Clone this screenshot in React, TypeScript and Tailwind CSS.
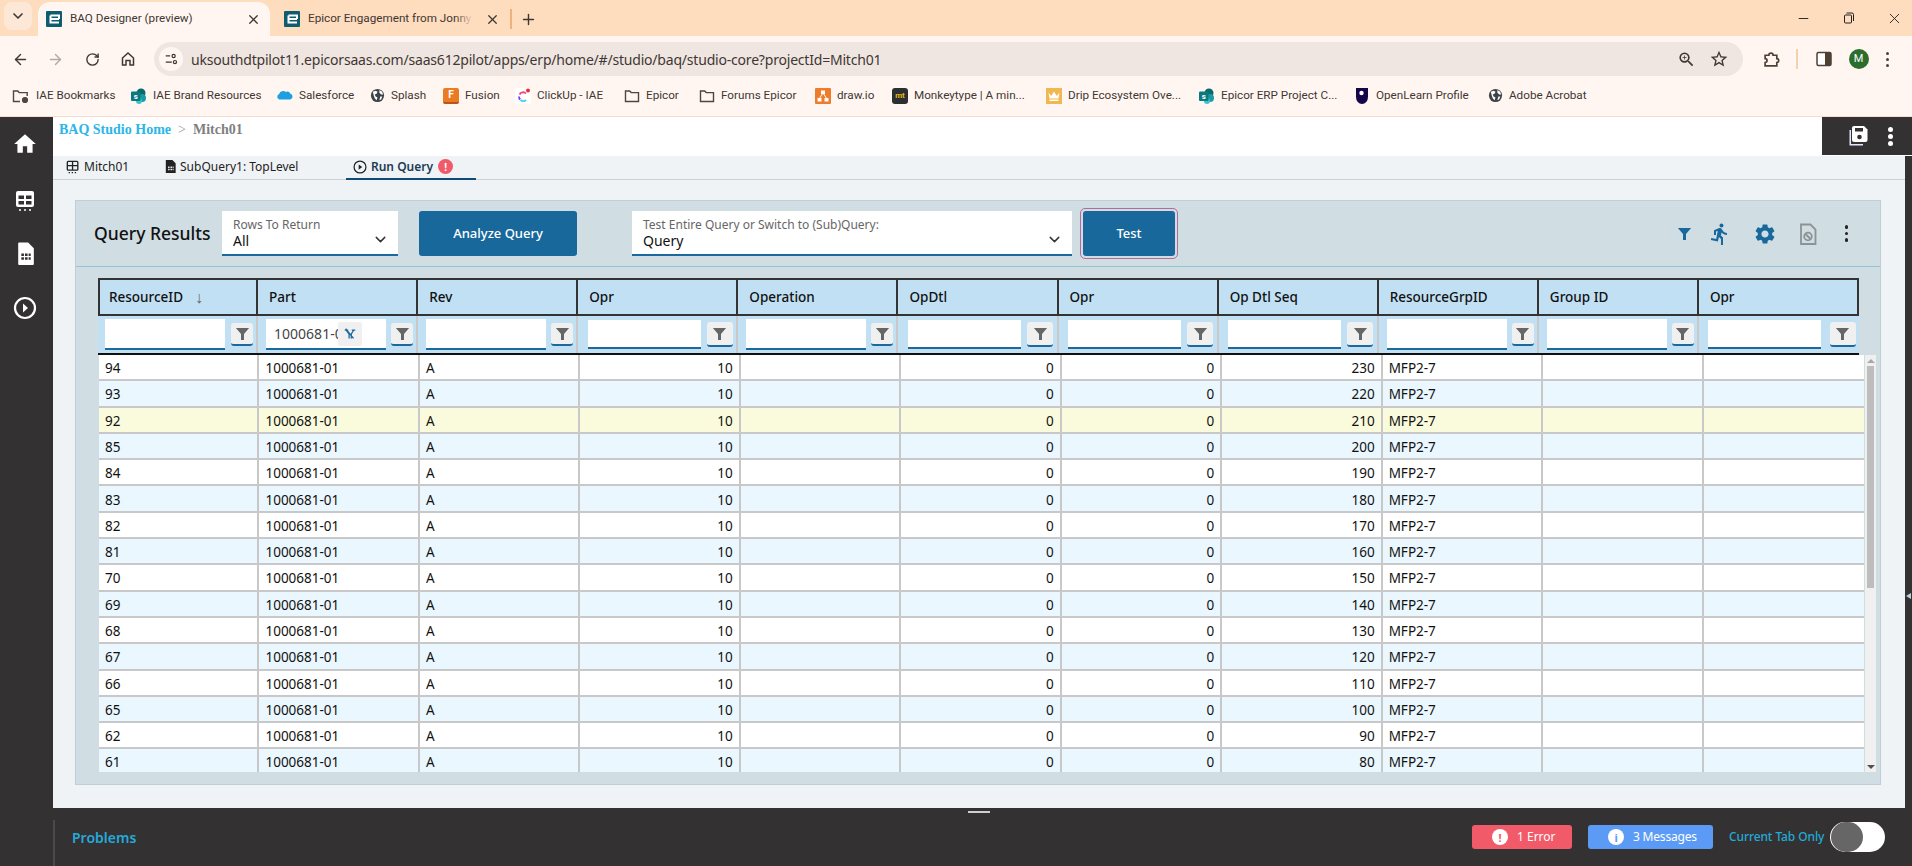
import { type ReactNode } from "react";
import { MdDirectionsRun, MdHome, MdSettings, MdStarBorder, MdZoomIn } from "react-icons/md";
import { ChevronDown, X, Plus, ArrowLeft, ArrowRight, RotateCw, Minus } from "lucide-react";

const COLUMNS: { label: string; num: boolean }[] = [
  { label: "ResourceID", num: false },
  { label: "Part", num: false },
  { label: "Rev", num: false },
  { label: "Opr", num: true },
  { label: "Operation", num: false },
  { label: "OpDtl", num: true },
  { label: "Opr", num: true },
  { label: "Op Dtl Seq", num: true },
  { label: "ResourceGrpID", num: false },
  { label: "Group ID", num: false },
  { label: "Opr", num: true },
];

const ROWS: [string, string][] = [
  ["94", "230"],
  ["93", "220"],
  ["92", "210"],
  ["85", "200"],
  ["84", "190"],
  ["83", "180"],
  ["82", "170"],
  ["81", "160"],
  ["70", "150"],
  ["69", "140"],
  ["68", "130"],
  ["67", "120"],
  ["66", "110"],
  ["65", "100"],
  ["62", "90"],
  ["61", "80"],
];

function EpicorLogo() {
  return (
    <svg viewBox="0 0 16 16" className="h-4 w-4 shrink-0">
      <rect width="16" height="16" rx="1" fill="#0f5c6e" />
      <path d="M13 8H4.500M4.500 4.500H13V8M4.500 4.500V11.500H13" fill="none" stroke="#fff" strokeWidth="2" />
    </svg>
  );
}

function Folder() {
  return (
    <svg viewBox="0 0 16 16" className="h-4 w-4 shrink-0" fill="none" stroke="#4f4640" strokeWidth="1.400">
      <path d="M1.500 3h4.200l1.500 1.600h7.300v8.900h-13z" />
    </svg>
  );
}

function Globe() {
  return (
    <svg viewBox="0 0 16 16" className="h-[15px] w-[15px] shrink-0">
      <circle cx="8" cy="8" r="7" fill="#3f4347" />
      <path d="M3 4l3-1 2 1-1 2-2 1 1 2 2 1-1 3-2-2-1-3zM10 2l3 2 1 3-2 0-2-2zM11 9l2 0-1 3-2 1z" fill="#fff" />
    </svg>
  );
}

function SharePoint() {
  return (
    <svg viewBox="0 0 16 16" className="h-4 w-4 shrink-0">
      <circle cx="10" cy="5" r="4.500" fill="#0b6a6e" />
      <circle cx="11" cy="10" r="4" fill="#1a9ba1" />
      <circle cx="8" cy="13" r="3" fill="#37c6d0" />
      <rect x="0" y="3.500" width="9.500" height="9.500" rx="1" fill="#0a7a7e" />
      <text x="4.700" y="11" textAnchor="middle" fontSize="8" fontWeight="700" fill="#fff">s</text>
    </svg>
  );
}

const BOOKMARKS: { label: string; width: string; icon: ReactNode }[] = [
  {
    label: "IAE Bookmarks",
    width: "w-[119px]",
    icon: (
      <svg viewBox="0 0 18 16" className="h-4 w-[18px] shrink-0" fill="none" stroke="#4f4640" strokeWidth="1.400">
        <path d="M8 13.500H1.500V3h4.200l1.500 1.600h8V8" />
        <circle cx="13" cy="12" r="2.400" fill="#4f4640" />
      </svg>
    ),
  },
  { label: "IAE Brand Resources", width: "w-[146px]", icon: <SharePoint /> },
  {
    label: "Salesforce",
    width: "w-[93px]",
    icon: (
      <svg viewBox="0 0 16 16" className="h-4 w-4 shrink-0">
        <path d="M6.500 3c1 0 1.800.4 2.300 1.100.5-.4 1.100-.6 1.700-.6 1.500 0 2.600 1 2.800 2.300 1.300.3 2.200 1.300 2.200 2.800 0 1.600-1.200 3-2.700 3H3.700C1.700 11.600.3 10.400.3 8.700c0-1.300.8-2.300 1.900-2.800.4-1.600 2.300-2.900 4.300-2.900z" fill="#1d9fe0" />
      </svg>
    ),
  },
  { label: "Splash", width: "w-[73px]", icon: <Globe /> },
  {
    label: "Fusion",
    width: "w-[72px]",
    icon: (
      <span className="flex h-4 w-4 shrink-0 items-center justify-center rounded-[2px] border-b-2 border-[#b9541a] bg-[#ea7b24] text-[10px] font-bold leading-none text-white">
        F
      </span>
    ),
  },
  {
    label: "ClickUp - IAE",
    width: "w-[109px]",
    icon: (
      <svg viewBox="0 0 16 16" className="h-4 w-4 shrink-0">
        <rect width="16" height="16" rx="2" fill="#fff" />
        <path d="M11 5.500a4 4 0 0 0-6.500 1" fill="none" stroke="#f0467e" strokeWidth="1.800" />
        <path d="M4 8.500a4 4 0 0 0 1.200 3" fill="none" stroke="#8930fd" strokeWidth="1.800" />
        <path d="M5.500 12a4 4 0 0 0 5.500 0" fill="none" stroke="#49ccf9" strokeWidth="1.800" />
        <circle cx="13" cy="2.500" r="2" fill="#ef2d2d" />
      </svg>
    ),
  },
  { label: "Epicor", width: "w-[75px]", icon: <Folder /> },
  { label: "Forums Epicor", width: "w-[116px]", icon: <Folder /> },
  {
    label: "draw.io",
    width: "w-[77px]",
    icon: (
      <svg viewBox="0 0 16 16" className="h-4 w-4 shrink-0">
        <rect width="16" height="16" rx="1" fill="#ee7c2b" />
        <path d="M8 5L4 11M8 5l4 6" stroke="#fff" strokeWidth="1" />
        <rect x="6" y="2.500" width="4" height="3.500" fill="#fff" />
        <rect x="2.500" y="10" width="4" height="3.500" fill="#fff" />
        <rect x="9.500" y="10" width="4" height="3.500" fill="#fff" />
      </svg>
    ),
  },
  {
    label: "Monkeytype | A min...",
    width: "w-[154px]",
    icon: (
      <span className="flex h-4 w-4 shrink-0 items-center justify-center rounded-[3px] bg-[#2c2e31] text-[8px] font-bold leading-none text-[#e2b714]">
        mt
      </span>
    ),
  },
  {
    label: "Drip Ecosystem Ove...",
    width: "w-[153px]",
    icon: (
      <svg viewBox="0 0 16 16" className="h-4 w-4 shrink-0">
        <rect width="16" height="16" fill="#efb850" />
        <path d="M2.500 4.500L5.200 8 8 3.500 10.800 8l2.700-3.500-1 6h-9zM3.500 11.500h9V13h-9z" fill="#fff" />
      </svg>
    ),
  },
  { label: "Epicor ERP Project C...", width: "w-[155px]", icon: <SharePoint /> },
  {
    label: "OpenLearn Profile",
    width: "w-[134px]",
    icon: (
      <svg viewBox="0 0 16 16" className="h-4 w-4 shrink-0">
        <path d="M2 0h12v9a6 7 0 0 1-12 0z" fill="#15064a" />
        <circle cx="7.500" cy="5" r="2.200" fill="#fff" />
      </svg>
    ),
  },
  { label: "Adobe Acrobat", width: "w-[120px]", icon: <Globe /> },
];

function Funnel({ className }: { className: string }) {
  return (
    <svg viewBox="0 0 16 16" className={className}>
      <path d="M1 2h14L9.600 8.500V15H6.400V8.500z" fill="currentColor" />
    </svg>
  );
}

function BrowserChrome() {
  return (
    <div className="shrink-0 font-['Roboto',sans-serif] text-[#3f3733]">
      {/* tab strip */}
      <div className="flex h-[36px] items-end bg-[#fedcbe]">
        <div className="ml-[4px] mb-[6px] flex h-[28px] w-[28px] items-center justify-center rounded-lg bg-[#fde8d8]">
          <ChevronDown className="h-4 w-4" strokeWidth={2.5} />
        </div>
        <div className="ml-[6px] flex h-[34px] w-[232px] items-center rounded-t-xl bg-[#fff6f2] pl-[8px] pr-[9px]">
          <EpicorLogo />
          <span className="ml-[8px] flex-1 text-[11.700px]">BAQ Designer (preview)</span>
          <X className="h-[15px] w-[15px]" strokeWidth={2} />
        </div>
        <div className="ml-[14px] flex h-[34px] items-center">
          <EpicorLogo />
          <span className="relative ml-[8px] w-[165px] whitespace-nowrap text-[11.700px]">
            Epicor Engagement from Jonny
            <span className="absolute inset-y-0 right-0 w-[18px] bg-gradient-to-r from-transparent to-[#fedcbe]" />
          </span>
          <X className="ml-[12px] h-[15px] w-[15px]" strokeWidth={2} />
          <span className="ml-[10px] h-[20px] w-[1.500px] bg-[#eeb27c]" />
          <Plus className="ml-[8px] h-[17px] w-[17px]" strokeWidth={2} />
        </div>
        <div className="ml-auto flex h-[36px] items-center pr-[9px] text-[#222]">
          <Minus className="h-[15px] w-[15px]" strokeWidth={1.5} />
          <svg viewBox="0 0 12 12" className="ml-[32px] h-[12px] w-[12px]" fill="none" stroke="currentColor" strokeWidth="1">
            <rect x="1.500" y="3" width="7" height="8" rx="1" />
            <path d="M3.500 1h5.500a1.500 1.500 0 0 1 1.500 1.500V9" />
          </svg>
          <X className="ml-[31px] h-[17px] w-[17px]" strokeWidth={1.3} />
        </div>
      </div>
      {/* address bar */}
      <div className="flex h-[40px] items-center bg-[#fff6f2] pl-[12px] pr-[8px] pt-[6px]">
        <ArrowLeft className="h-[17px] w-[17px]" strokeWidth={2} />
        <ArrowRight className="ml-[18px] h-[17px] w-[17px] text-[#b3a8a2]" strokeWidth={2} />
        <RotateCw className="ml-[21px] h-[15px] w-[15px]" strokeWidth={2.2} />
        <svg viewBox="0 0 16 16" className="ml-[20px] h-[16px] w-[16px]" fill="none" stroke="currentColor" strokeWidth="1.500">
          <path d="M2.500 7L8 2l5.500 5v7H10V9.500H6V14H2.500z" />
        </svg>
        <div className="ml-[18px] flex h-[34px] w-[1589px] items-center rounded-full bg-[#f0e6e1] pl-[5px] pr-[14px]">
          <span className="flex h-[24px] w-[24px] items-center justify-center rounded-full bg-[#fff6f2]">
            <svg viewBox="0 0 16 16" className="h-[14px] w-[14px]" fill="none" stroke="currentColor" strokeWidth="1.400">
              <path d="M2 4.500h5M2 11.500h7" />
              <circle cx="11" cy="4.500" r="1.800" />
              <circle cx="12.500" cy="11.500" r="1.800" />
            </svg>
          </span>
          <span className="ml-[8px] flex-1 font-['Noto_Sans',sans-serif] text-[14px] tracking-[-0.2px]">
            uksouthdtpilot11.epicorsaas.com/saas612pilot/apps/erp/home/#/studio/baq/studio-core?projectId=Mitch01
          </span>
          <MdZoomIn className="h-[19px] w-[19px]" />
          <MdStarBorder className="ml-[13px] h-[20px] w-[20px]" />
        </div>
        <svg viewBox="0 0 16 16" className="ml-[20px] h-[17px] w-[17px]" fill="none" stroke="#4f4034" strokeWidth="1.600">
          <path d="M2 4h3.500a2 2 0 0 1 4 0H13v3.200a1.800 1.800 0 0 1 0 3.600V14H2v-3.200a1.800 1.800 0 0 0 0-3.600z" />
        </svg>
        <span className="ml-[16px] h-[20px] w-[1.500px] bg-[#f5cfae]" />
        <svg viewBox="0 0 16 16" className="ml-[18px] h-[16px] w-[16px]">
          <rect x="1" y="1.500" width="14" height="13" rx="1.500" fill="#fff" stroke="#4f4034" strokeWidth="1.500" />
          <rect x="9" y="1.500" width="6" height="13" fill="#4f4034" />
        </svg>
        <span className="ml-[17px] flex h-[20px] w-[20px] items-center justify-center rounded-full bg-[#2b6e2d] text-[11px] text-white">
          M
        </span>
        <span className="ml-[17px] flex flex-col gap-[3px]">
          <i className="h-[3px] w-[3px] rounded-full bg-[#4f4034]" />
          <i className="h-[3px] w-[3px] rounded-full bg-[#4f4034]" />
          <i className="h-[3px] w-[3px] rounded-full bg-[#4f4034]" />
        </span>
      </div>
      {/* bookmarks */}
      <div className="flex h-[41px] items-center border-b border-[#f7dccd] bg-[#fff6f2] pl-[12px] text-[11.700px]">
        {BOOKMARKS.map((b, i) => (
          <div key={i} className={`flex items-center gap-[6px] whitespace-nowrap ${b.width}`}>
            {b.icon}
            <span>{b.label}</span>
          </div>
        ))}
      </div>
    </div>
  );
}

function Sidebar() {
  return (
    <aside className="flex w-[53px] shrink-0 flex-col items-center bg-[#333132] pr-[3px] pt-[14px] text-white">
      <MdHome className="h-[26px] w-[26px]" />
      <svg viewBox="0 0 24 24" className="mt-[32px] h-[24px] w-[24px]" fill="none">
        <rect x="3" y="2" width="18" height="16" rx="2" fill="#fff" />
        <path d="M5.500 6.500h5.500v3.500H5.500zM13 6.500h5.500v3.500H13zM5.500 12h5.500v3.500H5.500zM13 12h5.500v3.500H13z" fill="#333132" />
        <path d="M6 21h2M11 21h2M16 21h2" stroke="#fff" strokeWidth="1.600" />
      </svg>
      <svg viewBox="0 0 24 24" className="mt-[28px] h-[25px] w-[25px]">
        <path d="M6 1.500h8.500L20 7v15a1 1 0 0 1-1 1H6a1 1 0 0 1-1-1V2.500a1 1 0 0 1 1-1z" fill="#fff" />
        <path d="M8 12h2.500v2.500H8zM11.500 12H14v2.500h-2.500zM15 12h2v2.500h-2zM8 15.500h2.500V18H8zM11.500 15.500H14V18h-2.500zM15 15.500h2V18h-2z" fill="#333132" />
      </svg>
      <svg viewBox="0 0 24 24" className="mt-[30px] h-[24px] w-[24px]" fill="none">
        <circle cx="12" cy="12" r="10" stroke="#fff" strokeWidth="2.200" />
        <path d="M10 7.500l5 4.500-5 4.500z" fill="#fff" />
      </svg>
    </aside>
  );
}

function Select({ label, value, width }: { label: string; value: string; width: string }) {
  return (
    <div className={`relative flex h-[45px] flex-col justify-center border-b-2 border-[#1b6a9e] bg-white pl-[11px] ${width}`}>
      <span className="text-[12px] leading-[15px] text-[#666]">{label}</span>
      <span className="text-[14px] leading-[17px] text-[#111]">{value}</span>
      <ChevronDown className="absolute right-[9px] top-[20px] h-[17px] w-[17px] text-[#333]" strokeWidth={2} />
    </div>
  );
}

function QueryHeader() {
  return (
    <div className="flex h-[66px] shrink-0 items-center border-b border-[#96c3d3] pl-[18px] pr-[32px]">
      <h2 className="w-[128px] text-[17.500px] font-medium text-[#111]">Query Results</h2>
      <Select label="Rows To Return" value="All" width="w-[176px]" />
      <button className="ml-[21px] h-[45px] w-[158px] rounded-[3px] bg-[#18689c] text-[13px] font-medium text-white">
        Analyze Query
      </button>
      <div className="ml-[55px]">
        <Select label="Test Entire Query or Switch to (Sub)Query:" value="Query" width="w-[440px]" />
      </div>
      <div className="ml-[8px] rounded-[5px] border border-[#b9689a] p-[2px]">
        <button className="block h-[45px] w-[92px] rounded-[3px] bg-[#18689c] text-[13px] font-medium text-white">
          Test
        </button>
      </div>
      <div className="ml-auto flex items-center text-[#18689c]">
        <Funnel className="h-[15px] w-[15px]" />
        <MdDirectionsRun className="ml-[16px] h-[24px] w-[24px]" />
        <MdSettings className="ml-[21px] h-[24px] w-[24px]" />
        <svg viewBox="0 0 24 24" className="ml-[19px] h-[24px] w-[24px] text-[#8b9396]" fill="none" stroke="currentColor" strokeWidth="1.800">
          <path d="M5 2.500h9.500L19.500 7.500V22H5z" />
          <circle cx="12" cy="14.500" r="3.800" />
          <path d="M9.500 12l5 5" />
        </svg>
        <span className="ml-[25px] flex flex-col gap-[3px]">
          <i className="h-[3.500px] w-[3.500px] rounded-full bg-[#222]" />
          <i className="h-[3.500px] w-[3.500px] rounded-full bg-[#222]" />
          <i className="h-[3.500px] w-[3.500px] rounded-full bg-[#222]" />
        </span>
      </div>
    </div>
  );
}

function FilterCell({ num, value }: { num: boolean; value?: string }) {
  return (
    <div
      className={`flex items-center justify-between border-r-2 border-[#c8c8c8] last:border-r-0 ${
        num ? "pl-[9.500px] pr-[3.500px]" : "pl-[8px] pr-[3px] first:pl-[7px]"
      }`}
    >
      <div
        className={`relative overflow-hidden whitespace-nowrap border-b-2 border-[#1b6a9e] bg-white pl-[8px] text-[14px] leading-[29px] text-[#444] ${
          num ? "h-[29px] w-[113px]" : "h-[31px] w-[120px]"
        }`}
      >
        {value}
        {value && (
          <span className="absolute right-[24px] top-[3px] flex h-[24px] w-[24px] items-center justify-center rounded-[2px] bg-[#f0f0f0] text-[#1b6a9e]">
            <svg viewBox="0 0 16 16" className="h-[14px] w-[14px]" fill="none" stroke="currentColor" strokeWidth="1.500">
              <path d="M2 3.500h4M10 3.500h4M4 4L7 8v5M12 4L9.500 8v5M3 2l9 11" />
            </svg>
          </span>
        )}
      </div>
      <button
        className={`flex items-center justify-center rounded-[3px] border-b-2 border-[#1b6a9e] bg-[#f0f0f0] text-[#666] ${
          num ? "h-[25px] w-[26px]" : "h-[23px] w-[22px]"
        }`}
      >
        <Funnel className="h-[15px] w-[15px]" />
      </button>
    </div>
  );
}

function ResultsGrid() {
  return (
    <div className="flex min-h-0 flex-1 flex-col pl-[22px] pt-[11px]">
      <div className="w-[1761px] shrink-0 bg-[#c1e0f4]">
        <div className="grid h-[38px] grid-cols-11 border-y-2 border-[#333]">
          {COLUMNS.map((c, i) => (
            <div
              key={i}
              className="flex items-center border-r-2 border-[#333] pl-[11px] text-[13.500px] font-medium text-[#111] first:border-l-2 first:pl-[9px]"
            >
              {c.label}
              {i === 0 && <span className="ml-[12px] text-[16px] leading-none text-[#666]">↓</span>}
            </div>
          ))}
        </div>
      </div>
      <div className="w-[1761px] shrink-0 bg-[#c1e0f4]">
        <div className="grid h-[39px] grid-cols-11 border-b-2 border-[#111]">
          {COLUMNS.map((c, i) => (
            <FilterCell key={i} num={c.num} value={i === 1 ? "1000681-01" : undefined} />
          ))}
        </div>
      </div>
      <div className="flex min-h-0 flex-1 pl-[1px]">
        <div className="min-h-0 w-[1765px] overflow-hidden">
          {ROWS.map(([id, seq], r) => {
            const bg = r === 2 ? "bg-[#fafbdc]" : r % 2 === 1 ? "bg-[#ebf7fe]" : "bg-white";
            const values: Record<number, string> = {
              0: id,
              1: "1000681-01",
              2: "A",
              3: "10",
              5: "0",
              6: "0",
              7: seq,
              8: "MFP2-7",
            };
            return (
              <div key={id} className={`grid h-[26.300px] grid-cols-11 border-b-2 border-[#c8c8c8] text-[13.500px] text-[#111] ${bg}`}>
                {COLUMNS.map((c, i) => (
                  <div
                    key={i}
                    className={`flex items-center border-r-2 border-[#c8c8c8] px-[6px] pt-[2px] last:border-r-0 ${
                      c.num ? "justify-end" : ""
                    }`}
                  >
                    {values[i]}
                  </div>
                ))}
              </div>
            );
          })}
        </div>
        <div className="ml-[1px] flex w-[11px] shrink-0 flex-col items-center bg-[#f0f0f0] pt-[4px]">
          <span className="h-0 w-0 border-x-[4px] border-b-[4px] border-x-transparent border-b-[#a8a8a8]" />
          <span className="mt-[3px] h-[222px] w-[7px] bg-[#bdbdbd]" />
          <span className="mt-auto mb-[3px] h-0 w-0 border-x-[4px] border-t-[4px] border-x-transparent border-t-[#505050]" />
        </div>
      </div>
    </div>
  );
}

function BottomBar() {
  return (
    <div className="relative flex h-[58px] shrink-0 items-center bg-[#333132] pl-[19px] pr-[27px]">
      <span className="absolute left-0 bottom-0 h-[46px] w-[2px] bg-[#4a4a4a]" />
      <span className="absolute left-[915px] top-[3px] h-[2px] w-[22px] bg-[#cfcfcf]" />
      <span className="text-[14px] font-semibold text-[#25a9d9]">Problems</span>
      <button className="ml-auto flex h-[24px] w-[100px] items-center rounded-[3px] bg-[#f15a69] pl-[20px] text-[12px] text-white">
        <span className="flex h-[16px] w-[16px] items-center justify-center rounded-full bg-white text-[11px] font-bold leading-none text-[#f15a69]">
          !
        </span>
        <span className="ml-[9px]">1 Error</span>
      </button>
      <button className="ml-[16px] flex h-[24px] w-[125px] items-center rounded-[3px] bg-[#5b9bf6] pl-[20px] text-[12px] tracking-[-0.2px] text-white">
        <span className="flex h-[16px] w-[16px] items-center justify-center rounded-full bg-white text-[11px] font-bold leading-none text-[#5b9bf6]">
          i
        </span>
        <span className="ml-[9px]">3 Messages</span>
      </button>
      <span className="ml-[16px] w-[96px] whitespace-nowrap text-[12px] font-medium tracking-[-0.1px] text-[#22abd8]">
        Current Tab Only
      </span>
      <span className="ml-[5px] flex h-[30px] w-[55px] items-center rounded-full bg-white pl-[1px]">
        <span className="h-[30px] w-[32px] rounded-full bg-[#666]" />
      </span>
    </div>
  );
}

export default function App() {
  return (
    <div className="flex h-screen w-full flex-col overflow-hidden bg-white font-['Noto_Sans',sans-serif]">
      <BrowserChrome />
      <div className="flex min-h-0 flex-1">
        <Sidebar />
        <main className="flex min-h-0 min-w-0 flex-1 flex-col">
          {/* breadcrumb */}
          <div className="flex h-[39px] shrink-0 items-start justify-between bg-white">
            <div className="ml-[6px] mt-[2px] font-['Liberation_Serif',serif] text-[14px] font-bold">
              <span className="text-[#29b6e8]">BAQ Studio Home</span>
              <span className="mx-[7px] font-normal text-[#999]">&gt;</span>
              <span className="text-[#808080]">Mitch01</span>
            </div>
            <div className="flex h-[38px] w-[90px] items-center bg-[#333132] pl-[24px] text-white">
              <svg viewBox="0 0 24 24" className="h-[24px] w-[24px]">
                <path d="M5 6H3.500v15.500H17V20H5z" fill="#dfe7ff" />
                <path d="M8 2h10l3.500 3.500V16a2 2 0 0 1-2 2H8a2 2 0 0 1-2-2V4a2 2 0 0 1 2-2z" fill="#fff" />
                <rect x="9" y="4" width="8" height="3.500" fill="#333132" />
                <circle cx="13.500" cy="13" r="2.300" fill="#333132" />
              </svg>
              <span className="ml-[18px] flex flex-col gap-[2px]">
                <i className="h-[5px] w-[5px] rounded-full bg-white" />
                <i className="h-[5px] w-[5px] rounded-full bg-white" />
                <i className="h-[5px] w-[5px] rounded-full bg-white" />
              </span>
            </div>
          </div>
          <div className="flex min-h-0 flex-1">
            <div className="flex min-h-0 min-w-0 flex-1 flex-col bg-[#eff3f6]">
              {/* tabs */}
              <div className="flex h-[24px] shrink-0 items-stretch border-b border-[#c9d0d6] pb-[2px] text-[12px] text-[#222]">
                <div className="ml-[13px] flex w-[97px] items-center gap-[4px]">
                  <svg viewBox="0 0 16 16" className="h-[14px] w-[14px]" fill="none" stroke="#222" strokeWidth="1.500">
                    <rect x="1.500" y="1.500" width="12" height="10" rx="1" />
                    <path d="M7.500 1.500v10M1.500 6.500h12" />
                    <path d="M3 14.500h1.500M6.500 14.500h1.500M10 14.500h1.500" />
                  </svg>
                  Mitch01
                </div>
                <div className="flex w-[183px] items-center gap-[2px]">
                  <svg viewBox="0 0 16 16" className="h-[15px] w-[15px]">
                    <path d="M3 1h7l3.500 3.500V15H3z" fill="#222" />
                    <path d="M5.500 8H7v1.500H5.500zM8 8h1.500v1.500H8zM10.300 8h1v1.500h-1zM5.500 10.500H7V12H5.500zM8 10.500h1.500V12H8zM10.300 10.500h1V12h-1z" fill="#fff" />
                  </svg>
                  SubQuery1: TopLevel
                </div>
                <div className="-mb-[3px] flex w-[130px] items-center gap-[4px] border-b-2 border-[#0f4c75] pb-[1px] pl-[7px] font-semibold text-[#1d3c55]">
                  <svg viewBox="0 0 16 16" className="h-[14px] w-[14px]" fill="none">
                    <circle cx="8" cy="8" r="6.800" stroke="#222" strokeWidth="1.400" />
                    <path d="M6.500 5l4 3-4 3z" fill="#222" />
                  </svg>
                  Run Query
                  <span className="ml-[1px] flex h-[15px] w-[15px] items-center justify-center rounded-full bg-[#f15a69] text-[10px] font-bold leading-none text-white">
                    !
                  </span>
                </div>
              </div>
              {/* content */}
              <div className="flex min-h-0 flex-1 flex-col pb-[23px] pl-[22px] pr-[24px] pt-[20px]">
                <section className="flex min-h-0 flex-1 flex-col border border-[#c0cfd6] bg-[#d0dde3] pb-[12px]">
                  <QueryHeader />
                  <ResultsGrid />
                </section>
              </div>
            </div>
            <div className="relative w-[7px] shrink-0 bg-[#333132]">
              <span className="absolute left-[1px] top-[437px] h-0 w-0 border-y-[3px] border-r-[5px] border-y-transparent border-r-[#b9d3e0]" />
            </div>
          </div>
          <BottomBar />
        </main>
      </div>
    </div>
  );
}
